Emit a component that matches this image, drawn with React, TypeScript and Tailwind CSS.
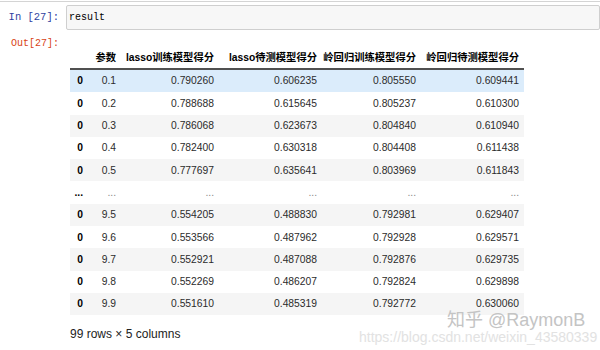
import React from 'react';

const rows: (string[] | null)[] = [
  ['0.1', '0.790260', '0.606235', '0.805550', '0.609441'],
  ['0.2', '0.788688', '0.615645', '0.805237', '0.610300'],
  ['0.3', '0.786068', '0.623673', '0.804840', '0.610940'],
  ['0.4', '0.782400', '0.630318', '0.804408', '0.611438'],
  ['0.5', '0.777697', '0.635641', '0.803969', '0.611843'],
  null,
  ['9.5', '0.554205', '0.488830', '0.792981', '0.629407'],
  ['9.6', '0.553566', '0.487962', '0.792928', '0.629571'],
  ['9.7', '0.552921', '0.487088', '0.792876', '0.629735'],
  ['9.8', '0.552269', '0.486207', '0.792824', '0.629898'],
  ['9.9', '0.551610', '0.485319', '0.792772', '0.630060'],
];

const headers = ['参数', 'lasso训练模型得分', 'lasso待测模型得分', '岭回归训练模型得分', '岭回归待测模型得分'];
const widths = ['w-[32px]', 'w-[98px]', 'w-[103px]', 'w-[99px]', 'w-[103px]'];

const sans = { fontFamily: '"Liberation Sans", Arial, "Noto Sans CJK SC", sans-serif' };
const mono = { fontFamily: '"Liberation Mono", "DejaVu Sans Mono", monospace' };

export default function App() {
  return (
    <div className="relative w-[600px] h-[350px] overflow-hidden bg-white" style={sans}>
      <div className="border-t border-[#d4d4d4] mt-px">
        {/* input cell */}
        <div className="flex pt-[3px]">
          <div className="w-[66px] shrink-0 pr-[7px] text-right text-[10.5px] leading-[25px] text-[#303f9f]" style={mono}>
            In&nbsp;[27]:
          </div>
          <div className="flex-1 h-[25px] bg-[#f7f7f7] border border-[#cfcfcf] rounded-[2px] pl-[2px] text-[10px] leading-[23px] text-black" style={mono}>
            result
          </div>
        </div>

        {/* output cell */}
        <div className="flex">
          <div className="w-[66px] shrink-0 pr-[7px] pt-[8px] text-right text-[10px] leading-[12px] text-[#d84315]" style={mono}>
            Out[27]:
          </div>
          <div className="pl-[4px] pt-[18px]">
            <div className="text-[10.3px] text-black">
              <div className="flex h-[22px] items-center font-bold border-b-2 border-[#505050]">
                <div className="w-[19px]" />
                {headers.map((h, i) => (
                  <div key={h} className={`${widths[i]} text-right pr-[5px] whitespace-nowrap`}>{h}</div>
                ))}
              </div>
              {rows.map((r, ri) => {
                const bg = ri === 0 ? 'bg-[#dbecfb]' : ri % 2 === 0 ? 'bg-[#f5f5f5]' : 'bg-white';
                return (
                  <div key={ri} className={`flex h-[22.3px] items-center ${bg}`}>
                    <div className="w-[19px] text-right pr-[6px] font-bold">{r ? '0' : '...'}</div>
                    {(r ?? ['...', '...', '...', '...', '...']).map((c, ci) => (
                      <div
                        key={ci}
                        className={`${widths[ci]} text-right pr-[5px] ${r ? 'text-[#2b2b2b]' : 'text-[#8a8a8a]'}`}
                      >
                        {c}
                      </div>
                    ))}
                  </div>
                );
              })}
            </div>
            <div className="mt-[12px] text-[12px] leading-[14px] text-[#222]">99 rows × 5 columns</div>
          </div>
        </div>
      </div>

      {/* watermark */}
      <div className="absolute left-[447px] top-[311px] text-[18px] leading-[19px] text-[#c4c4c4] whitespace-nowrap">
        知乎 @RaymonB
      </div>
      <div className="absolute left-[359px] top-[330px] text-[14px] leading-[15px] text-[#e2e2e2] whitespace-nowrap">
        https://blog.csdn.net/weixin_43580339
      </div>
    </div>
  );
}
